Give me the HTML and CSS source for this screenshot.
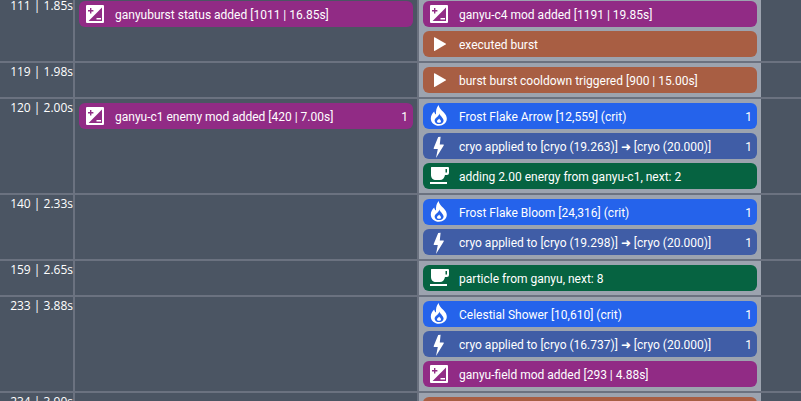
FILE: index.html
```html
<!DOCTYPE html>
<html>
<head>
<meta charset="utf-8">
<title>Debug timeline</title>
<link rel="stylesheet" href="styles.css">
</head>
<body>
<svg class="defs" width="0" height="0">
  <symbol id="i-mod" viewBox="0 0 20 24">
    <path fill="#fff" fill-rule="evenodd" d="M1 3H17A1 1 0 0 1 18 4V20A1 1 0 0 1 17 21H1A1 1 0 0 1 0 20V4A1 1 0 0 1 1 3ZM4 6V8H2V9.4H4V11.4H5.4V9.4H7.4V8H5.4V6ZM16 5.6 2.6 19H16ZM10.5 16V17.4H15V16Z"/>
  </symbol>
  <symbol id="i-play" viewBox="0 0 20 24">
    <path fill="#fff" d="M4.6 5.3 15.6 11.4Q16.4 12 15.6 12.6L4.6 19Q4 19.2 4 18.6V5.8Q4 5.1 4.6 5.3Z"/>
  </symbol>
  <symbol id="i-fire" viewBox="0 0 20 24">
    <path fill="#fff" fill-rule="evenodd" d="M8.6 1C9 4 11.2 5.8 13.4 8 15.6 10.3 16.8 12.3 16.8 14.8 16.8 18.8 13.2 21.8 8.9 21.8 4.6 21.8.8 18.8.8 14.5.8 11.6 2.2 9.2 4.2 7.4 4.4 8.8 5 9.8 6 10.4 5.8 7 6.2 3.8 8.6 1ZM9.4 9.4C9.2 12.2 5 13.4 4.6 16.4 4.6 18.8 6.6 20 9 20 11.4 20 13.6 18.8 13.6 16.4 13.2 13.4 10 12 9.4 9.4ZM9.2 14.6C9.4 15.6 11 16.2 11 17.4 11 18.4 10 18.8 9 18.8 8 18.8 7 18.4 7 17.4 7 16.2 8.8 15.6 9.2 14.6Z"/>
  </symbol>
  <symbol id="i-bolt" viewBox="0 0 20 24">
    <path fill="#fff" d="M8.2 3 10.6 2.7 9.8 10.5H13.4Q14.1 10.8 13.7 11.4L6 24 7.8 15H4Q3.4 14.6 3.7 14Z"/>
  </symbol>
  <symbol id="i-cup" viewBox="0 0 20 24">
    <path fill="#fff" fill-rule="evenodd" d="M1.5 3H18A1 1 0 0 1 19 4V9A2 2 0 0 1 17 11H15C14.5 14 12.5 16 10 16H6C3 16 1 14 1 11V3.5A.5.5 0 0 1 1.5 3ZM15.5 5V8.6H17V5ZM0 18H17V20H0Z"/>
  </symbol>
</svg>

<div class="timeline">

  <div class="row">
    <div class="time">111 | 1.85s</div>
    <div class="slot">
      <div class="ev mod"><svg class="ic"><use href="#i-mod"/></svg><span class="msg">ganyuburst status added [1011 | 16.85s]</span></div>
    </div>
    <div class="slot active">
      <div class="ev mod"><svg class="ic"><use href="#i-mod"/></svg><span class="msg">ganyu-c4 mod added [1191 | 19.85s]</span></div>
      <div class="ev act"><svg class="ic"><use href="#i-play"/></svg><span class="msg">executed burst</span></div>
    </div>
    <div class="slot last"></div>
  </div>

  <div class="row">
    <div class="time">119 | 1.98s</div>
    <div class="slot"></div>
    <div class="slot active">
      <div class="ev act"><svg class="ic"><use href="#i-play"/></svg><span class="msg">burst burst cooldown triggered [900 | 15.00s]</span></div>
    </div>
    <div class="slot last"></div>
  </div>

  <div class="row">
    <div class="time">120 | 2.00s</div>
    <div class="slot">
      <div class="ev mod"><svg class="ic"><use href="#i-mod"/></svg><span class="msg">ganyu-c1 enemy mod added [420 | 7.00s]</span><span class="count">1</span></div>
    </div>
    <div class="slot active">
      <div class="ev dmg"><svg class="ic"><use href="#i-fire"/></svg><span class="msg">Frost Flake Arrow [12,559] (crit)</span><span class="count">1</span></div>
      <div class="ev aura"><svg class="ic"><use href="#i-bolt"/></svg><span class="msg">cryo applied to [cryo (19.263)] ➜ [cryo (20.000)]</span><span class="count">1</span></div>
      <div class="ev energy"><svg class="ic"><use href="#i-cup"/></svg><span class="msg">adding 2.00 energy from ganyu-c1, next: 2</span></div>
    </div>
    <div class="slot last"></div>
  </div>

  <div class="row">
    <div class="time">140 | 2.33s</div>
    <div class="slot"></div>
    <div class="slot active">
      <div class="ev dmg"><svg class="ic"><use href="#i-fire"/></svg><span class="msg">Frost Flake Bloom [24,316] (crit)</span><span class="count">1</span></div>
      <div class="ev aura"><svg class="ic"><use href="#i-bolt"/></svg><span class="msg">cryo applied to [cryo (19.298)] ➜ [cryo (20.000)]</span><span class="count">1</span></div>
    </div>
    <div class="slot last"></div>
  </div>

  <div class="row">
    <div class="time">159 | 2.65s</div>
    <div class="slot"></div>
    <div class="slot active">
      <div class="ev energy"><svg class="ic"><use href="#i-cup"/></svg><span class="msg">particle from ganyu, next: 8</span></div>
    </div>
    <div class="slot last"></div>
  </div>

  <div class="row">
    <div class="time">233 | 3.88s</div>
    <div class="slot"></div>
    <div class="slot active">
      <div class="ev dmg"><svg class="ic"><use href="#i-fire"/></svg><span class="msg">Celestial Shower [10,610] (crit)</span><span class="count">1</span></div>
      <div class="ev aura"><svg class="ic"><use href="#i-bolt"/></svg><span class="msg">cryo applied to [cryo (16.737)] ➜ [cryo (20.000)]</span><span class="count">1</span></div>
      <div class="ev mod"><svg class="ic"><use href="#i-mod"/></svg><span class="msg">ganyu-field mod added [293 | 4.88s]</span></div>
    </div>
    <div class="slot last"></div>
  </div>

  <div class="row">
    <div class="time">234 | 3.90s</div>
    <div class="slot"></div>
    <div class="slot active">
      <div class="ev act"><svg class="ic"><use href="#i-play"/></svg><span class="msg"></span></div>
    </div>
    <div class="slot last"></div>
  </div>

</div>
</body>
</html>
```

FILE: styles.css
```css
html, body {
	margin: 0;
	padding: 0;
	height: 100%;
	overflow: hidden;
	background: #4b5563;
}

.defs {
	display: block;
	height: 0;
}

.timeline {
	font-family: "Roboto", "Open Sans", sans-serif;
	font-size: 12px;
	line-height: 16px;
	color: #fff;
	margin-top: -3px;
}

.row {
	display: grid;
	grid-template-columns: 73px 344px 344px 40px;
	border-bottom: 2px solid #6b7280;
}

.time {
	font-family: "Open Sans", sans-serif;
	text-align: right;
	padding-top: 1px;
}

.slot {
	display: flex;
	flex-direction: column;
	gap: 4px;
	padding: 4px;
	border-left: 2px solid #6b7280;
}

.slot.active {
	background: #9ca3af;
}

.slot.last {
	border-left: 0;
}

.ev {
	display: flex;
	align-items: center;
	height: 26px;
	border-radius: 6px;
	padding-right: 5px;
}

.ic {
	width: 20px;
	height: 24px;
	margin: 0 9px 0 7px;
	flex: none;
}

.msg {
	flex: 1;
	white-space: nowrap;
	padding-top: 2px;
}

.count {
	flex: none;
	padding-top: 2px;
}

.mod { background: #912b85; }
.act { background: #a85e43; }
.dmg { background: #2563eb; }
.aura { background: #405da6; }
.energy { background: #066341; }
```
